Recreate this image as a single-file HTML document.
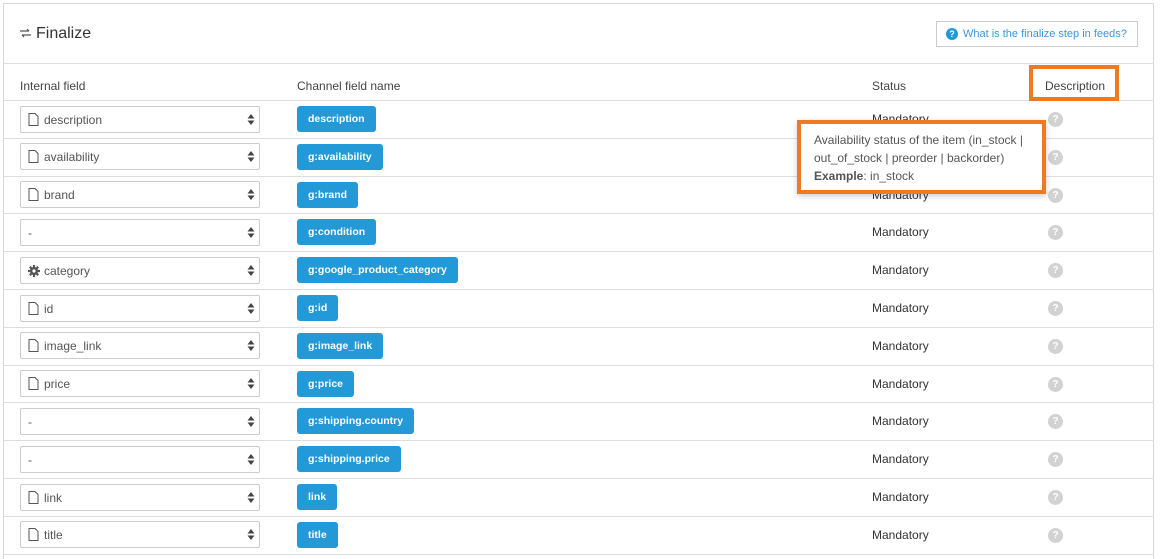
<!DOCTYPE html>
<html><head><meta charset="utf-8"><style>
*{box-sizing:border-box;margin:0;padding:0}
html,body{width:1160px;height:559px;overflow:hidden}
body{background:#fff;font-family:"Liberation Sans",sans-serif;position:relative;color:#333}
.card{position:absolute;left:3px;top:3px;width:1151px;height:580px;border:1px solid #d6d6d6;background:#fff}
.title{position:absolute;left:19px;top:25px;font-size:16px;color:#333}
.help{position:absolute;left:936px;top:21px;width:202px;height:26px;border:1px solid #ccc;font-size:11px;color:#3b97dd;padding:6px 0 0 26px}
.help i{position:absolute;left:9px;top:6px;width:12px;height:12px;border-radius:50%;background:#2196d9;color:#fff;font-size:9px;font-style:normal;font-weight:bold;text-align:center;line-height:12px}
.hl{position:absolute;left:4px;width:1150px;height:1px;background:#ddd}
.th{position:absolute;top:79px;font-size:12px;color:#444}
.sel{position:absolute;left:20px;width:240px;height:27px;border:1px solid #ccc;border-radius:2px;font-size:12px;color:#555;padding:6px 0 0 23px}
.sel svg.f{position:absolute;left:7px;top:6px}
.sel .ar{position:absolute;right:4px;top:6px}
.badge{position:absolute;left:297px;height:26px;background:#2399d8;color:#fff;font-size:10.5px;font-weight:bold;border-radius:3px;padding:0 11px;line-height:26px}
.st{position:absolute;left:872px;font-size:12px;color:#333}
.q{position:absolute;left:1048px;width:15px;height:15px;border-radius:50%;background:#d2d2d2;color:#fff;font-size:10px;font-weight:bold;text-align:center;line-height:15px}
.desc{position:absolute;left:1029px;top:65px;width:90px;height:36px;border:4px solid #f07a22;font-size:12px;color:#444;padding:10px 0 0 12px;background:#fff}
.tip{position:absolute;left:797px;top:120px;width:249px;height:74px;border:4px solid #f07a22;background:#fff;font-size:12px;color:#555;padding:7px 0 0 13px;line-height:18px;box-shadow:0 2px 6px rgba(0,0,0,.2)}
</style></head><body>
<div class="card"></div>
<div class="title"><svg width="13" height="10" viewBox="0 0 13 10" style="margin-right:4px"><path d="M1 3h9M10 3l-2-2M12 7H3M3 7l2 2" stroke="#555" fill="none" stroke-width="1.2"/></svg>Finalize</div>
<div class="help"><i>?</i>What is the finalize step in feeds?</div>
<div class="hl" style="top:63px"></div>
<div class="th" style="left:20px">Internal field</div>
<div class="th" style="left:297px">Channel field name</div>
<div class="th" style="left:872px">Status</div>
<div class="hl" style="top:100px"></div>
<div id="rows"></div>
<script>
var r=[["description","description",0],["availability","g:availability",0],["brand","g:brand",0],["-","g:condition",2],["category","g:google_product_category",1],["id","g:id",0],["image_link","g:image_link",0],["price","g:price",0],["-","g:shipping.country",2],["-","g:shipping.price",2],["link","link",0],["title","title",0]];
var h="";
var ar='<svg class="ar" width="8" height="13" viewBox="0 0 8 13"><path d="M4 1L7.5 5.5H.5zM4 12L7.5 7.5H.5z" fill="#444"/></svg>';
r.forEach(function(x,i){var t=100+i*37.8,c=t+19;
var ic=x[2]==0?'<svg class="f" width="11" height="13" viewBox="0 0 11 13"><path d="M1 .5h6l3 3v9H1z" stroke="#555" fill="none"/></svg>':x[2]==1?'<svg class="f" width="12" height="12" viewBox="0 0 12 12" style="top:7px"><circle cx="6" cy="6" r="4" fill="#555"/><path d="M6 0v12M0 6h12M1.8 1.8l8.4 8.4M10.2 1.8l-8.4 8.4" stroke="#555" stroke-width="2.2"/><circle cx="6" cy="6" r="1.6" fill="#fff"/></svg>':'';
var pad=x[2]==2?' style="top:'+(c-13.5)+'px;padding-left:7px"':' style="top:'+(c-13.5)+'px"';
h+='<div class="sel"'+pad+'>'+ic+x[0]+ar+'</div>';
h+='<div class="badge" style="top:'+(c-13)+'px">'+x[1]+'</div>';
h+='<div class="st" style="top:'+(c-7)+'px">Mandatory</div>';
h+='<div class="q" style="top:'+(c-7)+'px">?</div>';
h+='<div class="hl" style="top:'+(t+37.8)+'px"></div>';});
document.getElementById("rows").innerHTML=h;
</script>
<div class="desc">Description</div>
<div class="tip">Availability status of the item (in_stock |<br>out_of_stock | preorder | backorder)<br><b>Example</b>: in_stock</div>
</body></html>
